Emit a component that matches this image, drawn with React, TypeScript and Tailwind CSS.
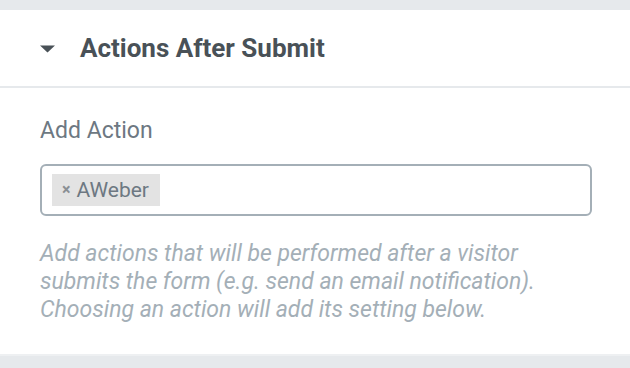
export default function App() {
  return (
    <div
      className="w-[630px] h-[368px] bg-[#e6e9ec] pt-[10px] overflow-hidden"
      style={{ fontFamily: "Roboto, 'Liberation Sans', sans-serif" }}
    >
      <div className="bg-white">
        <div className="h-[78px] flex items-center pl-[40px] border-b-2 border-[#e6e9ec]">
          <svg width="15" height="8" viewBox="0 0 15 8" className="mr-[25px] mt-[1px]">
            <path d="M0 0.5 L15 0.5 L7.5 7.5 Z" fill="#495157" />
          </svg>
          <span className="text-[26px] leading-[30px] font-bold text-[#495157]">Actions After Submit</span>
        </div>
        <div className="pl-[40px] pr-[38px] pt-[29px] pb-[30px] border-b-2 border-[#eef0f2]">
          <div className="text-[23px] leading-[28px] text-[#6d7882]">Add Action</div>
          <div className="mt-[19px] h-[52px] border-2 border-[#a4afb7] rounded-[6px] flex items-center pl-[10px]">
            <div className="h-[32px] bg-[#e3e3e3] flex items-center pl-[10px] pr-[11px] text-[#6d7882]">
              <span className="text-[16px] font-bold text-[#8a8f94] mr-[6px]">×</span>
              <span className="text-[21px] leading-[24px]">AWeber</span>
            </div>
          </div>
          <p className="mt-[24px] text-[23px] leading-[28px] italic text-[#a4afb7]">
            Add actions that will be performed after a visitor
            <br />
            submits the form (e.g. send an email notification).
            <br />
            Choosing an action will add its setting below.
          </p>
        </div>
      </div>
    </div>
  );
}
